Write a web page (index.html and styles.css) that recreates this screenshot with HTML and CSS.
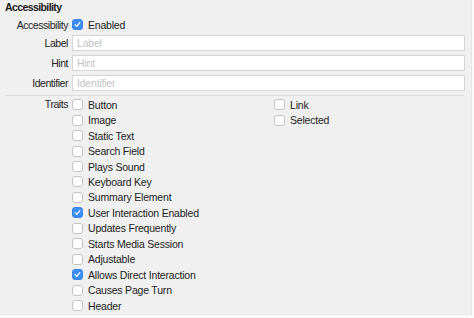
FILE: index.html
```html
<!DOCTYPE html>
<html>
<head>
<meta charset="utf-8">
<link rel="stylesheet" href="styles.css">
</head>
<body>
<div class="panel">
  <div class="title">Accessibility</div>
  <div class="form">
    <div class="row row-check">
      <span class="label">Accessibility</span>
      <span class="control"><span class="cb on"><svg viewBox="0 0 11 11"><path d="M2.6 5.6 L4.6 7.7 L8.4 3.2"/></svg></span><span class="txt">Enabled</span></span>
    </div>
    <div class="row row-field">
      <span class="label">Label</span>
      <span class="field">Label</span>
    </div>
    <div class="row row-field">
      <span class="label">Hint</span>
      <span class="field">Hint</span>
    </div>
    <div class="row row-field">
      <span class="label">Identifier</span>
      <span class="field">Identifier</span>
    </div>
  </div>
  <div class="sep"></div>
  <div class="traits">
    <span class="label tl">Traits</span>
    <div class="col">
      <div class="item"><span class="cb"></span><span class="txt">Button</span></div>
      <div class="item"><span class="cb"></span><span class="txt">Image</span></div>
      <div class="item"><span class="cb"></span><span class="txt">Static Text</span></div>
      <div class="item"><span class="cb"></span><span class="txt">Search Field</span></div>
      <div class="item"><span class="cb"></span><span class="txt">Plays Sound</span></div>
      <div class="item"><span class="cb"></span><span class="txt">Keyboard Key</span></div>
      <div class="item"><span class="cb"></span><span class="txt">Summary Element</span></div>
      <div class="item"><span class="cb on"><svg viewBox="0 0 11 11"><path d="M2.6 5.6 L4.6 7.7 L8.4 3.2"/></svg></span><span class="txt">User Interaction Enabled</span></div>
      <div class="item"><span class="cb"></span><span class="txt">Updates Frequently</span></div>
      <div class="item"><span class="cb"></span><span class="txt">Starts Media Session</span></div>
      <div class="item"><span class="cb"></span><span class="txt">Adjustable</span></div>
      <div class="item"><span class="cb on"><svg viewBox="0 0 11 11"><path d="M2.6 5.6 L4.6 7.7 L8.4 3.2"/></svg></span><span class="txt">Allows Direct Interaction</span></div>
      <div class="item"><span class="cb"></span><span class="txt">Causes Page Turn</span></div>
      <div class="item"><span class="cb"></span><span class="txt">Header</span></div>
    </div>
    <div class="col">
      <div class="item"><span class="cb"></span><span class="txt">Link</span></div>
      <div class="item"><span class="cb"></span><span class="txt">Selected</span></div>
    </div>
  </div>
</div>
</body>
</html>
```

FILE: styles.css
```css
* { box-sizing: border-box; }
html, body { margin: 0; padding: 0; }
body {
  background: #fbfbfb;
  font-family: "Liberation Sans", Arial, sans-serif;
  font-size: 10.5px;
  letter-spacing: -0.2px;
  color: #222;
  width: 474px;
  height: 318px;
  overflow: hidden;
}
.panel {
  width: 472px;
  height: 315px;
  background: #f0f0f0;
  border-right: 1px solid #e4e4e4;
  border-bottom: 1px solid #e8e8e8;
}
.title {
  height: 14px;
  line-height: 14px;
  padding-left: 5px;
  font-weight: bold;
  color: #1a1a1a;
  letter-spacing: -0.6px;
}
.form {
  display: flex;
  flex-direction: column;
  gap: 4px;
  margin-top: 3px;
}
.row {
  display: grid;
  grid-template-columns: 68px 1fr;
  column-gap: 4px;
  align-items: center;
  padding-right: 6px;
}
.row-check { height: 15px; margin-bottom: -1px; }
.row-field { height: 16px; }
.label {
  text-align: right;
  color: #262626;
  letter-spacing: -0.45px;
}
.control { display: flex; align-items: center; }
.field {
  height: 16px;
  background: #fff;
  border: 1px solid #d6d6d6;
  color: #c3c3c3;
  line-height: 14px;
  padding-left: 4px;
}
.sep {
  height: 1px;
  background: #dcdcdc;
  margin: 4px 7px 0 5px;
}
.traits {
  display: grid;
  grid-template-columns: 68px 198px 1fr;
  column-gap: 4px;
  margin-top: 1px;
}
.tl { line-height: 15.46px; height: 15.46px; }
.col { display: grid; grid-auto-rows: 15.46px; }
.item { display: flex; align-items: center; }
.cb {
  width: 11px;
  height: 11px;
  border: 1px solid #c4c4c4;
  border-radius: 3px;
  background: #fff;
  flex: none;
  margin-right: 5px;
  display: flex;
  align-items: center;
  justify-content: center;
}
.cb.on {
  background: #3b8ef5;
  border-color: #3b85e6;
}
.cb svg { width: 11px; height: 11px; }
.cb path {
  fill: none;
  stroke: #fff;
  stroke-width: 1.5;
  stroke-linecap: round;
  stroke-linejoin: round;
}
.txt { white-space: nowrap; }
```
